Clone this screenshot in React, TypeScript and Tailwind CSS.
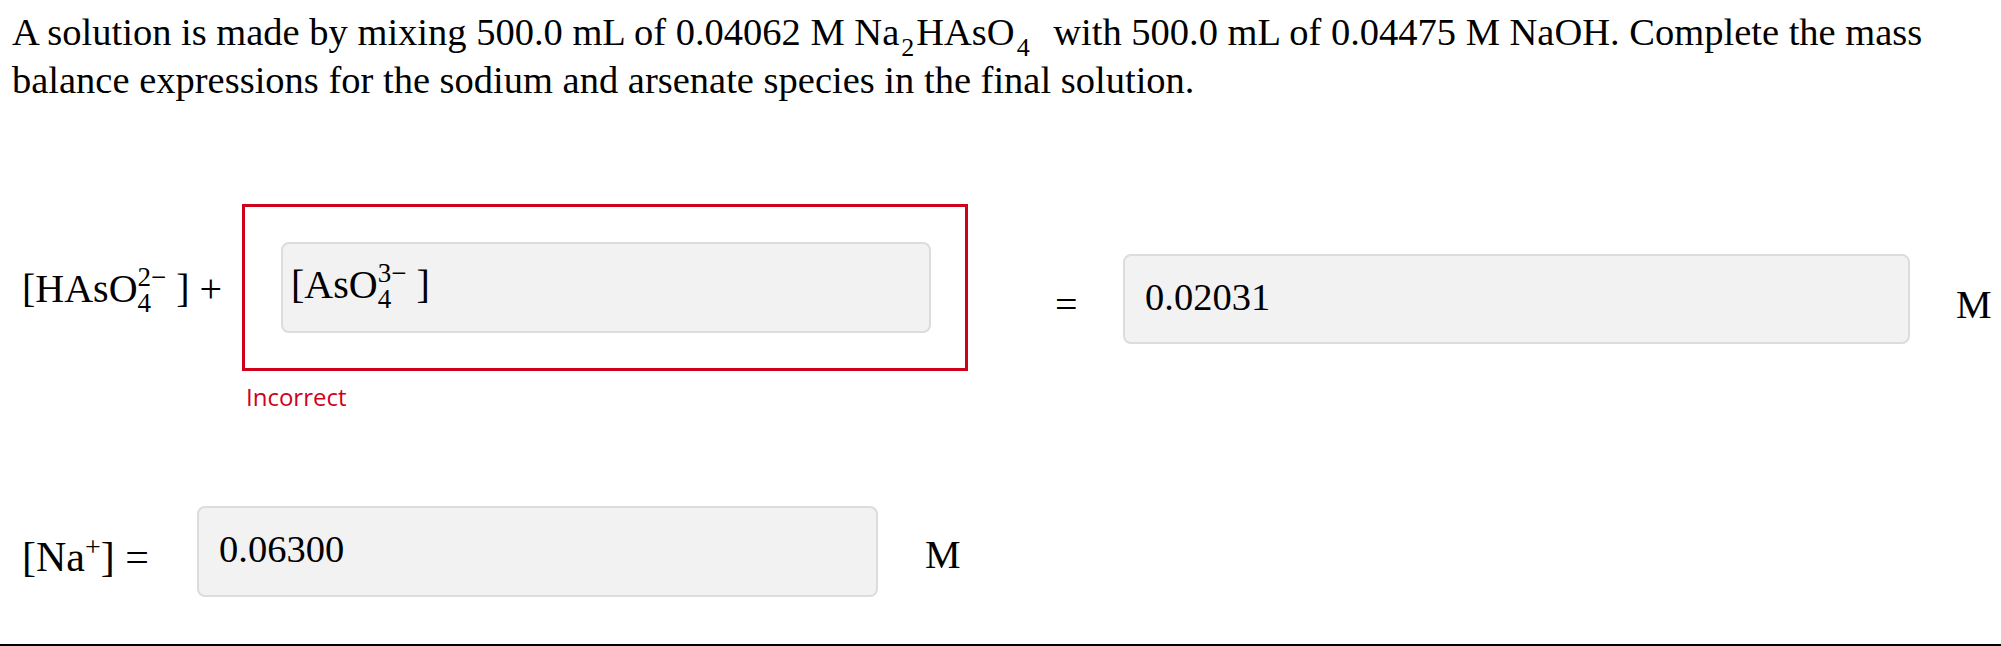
import React from "react";

function Sub({ children, mr }: { children: React.ReactNode; mr: string }) {
  return <span className={`text-[26px] leading-[0] align-[-11px] ml-[2px] ${mr}`}>{children}</span>;
}

function Scripts({ sup, sub }: { sup: string; sub: string }) {
  return (
    <span className="inline-flex flex-col align-[16px] text-[27px] leading-[26px]">
      <span>{sup}</span>
      <span>{sub}</span>
    </span>
  );
}

function Field({ w, h, pl, children }: { w: string; h: string; pl: string; children: React.ReactNode }) {
  return (
    <div className={`${w} ${h} ${pl} bg-[#f2f2f2] border-2 border-[#dcdcdc] rounded-[8px] pt-[16px] text-[40px] leading-[50px] whitespace-nowrap`}>
      {children}
    </div>
  );
}

export default function App() {
  return (
    <div className="w-[2001px] h-[646px] bg-white text-black font-['Liberation_Serif',serif] flex flex-col overflow-hidden">
      <p className="h-[104px] pl-[12px] pt-[8px] text-[38.5px] leading-[48px] whitespace-nowrap">
        A solution is made by mixing 500.0 mL of 0.04062 M Na<Sub mr="mr-[2px]">2</Sub>HAsO<Sub mr="mr-[14px]">4</Sub> with 500.0 mL of 0.04475 M NaOH. Complete the mass
        <br />
        balance expressions for the sodium and arsenate species in the final solution.
      </p>

      <div className="flex items-start mt-[100px]">
        <div className="ml-[22px] mt-[60px] w-[220px] text-[40px] leading-[50px] whitespace-nowrap">
          [HAsO<Scripts sup="2−" sub="4" /> ] +
        </div>
        <div className="flex flex-col">
          <div className="w-[726px] h-[167px] border-[3px] border-[#d0021b] pt-[35px] pl-[36px]">
            <Field w="w-[650px]" h="h-[91px]" pl="pl-[8px]">
              [AsO<Scripts sup="3−" sub="4" /> ]
            </Field>
          </div>
          <div className="ml-[4px] mt-[11px] font-['Open_Sans',sans-serif] text-[24px] leading-[30px] text-[#d0021b]">
            Incorrect
          </div>
        </div>
        <div className="ml-[87px] mt-[76px] w-[68px] text-[40px] leading-[50px]">=</div>
        <div className="mt-[50px]">
          <Field w="w-[787px]" h="h-[90px]" pl="pl-[20px]">
            <span className="text-[38.5px]">0.02031</span>
          </Field>
        </div>
        <div className="ml-[46px] mt-[76px] text-[40px] leading-[50px]">M</div>
      </div>

      <div className="flex items-start mt-[94px]">
        <div className="ml-[22px] mt-[26px] w-[175px] text-[42px] leading-[50px] whitespace-nowrap">
          [Na<span className="text-[28px] leading-[0] align-[15px]">+</span>] =
        </div>
        <Field w="w-[681px]" h="h-[91px]" pl="pl-[20px]">
          <span className="text-[38.5px]">0.06300</span>
        </Field>
        <div className="ml-[47px] mt-[24px] text-[40px] leading-[50px]">M</div>
      </div>

      <div className="mt-auto h-[2px] bg-black" />
    </div>
  );
}
